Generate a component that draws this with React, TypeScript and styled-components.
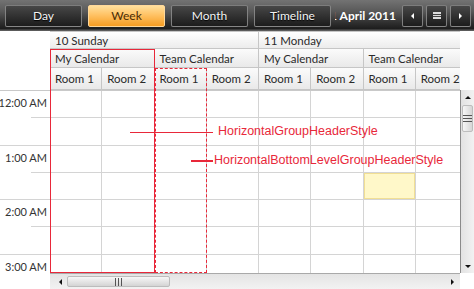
import React from 'react';
import styled, { createGlobalStyle, css } from 'styled-components';

const COL = 52.25;
const SLOT = 27.25;
const RED = '#e8283a';

const Global = createGlobalStyle`
  html, body { margin: 0; padding: 0; background: #fff; overflow: hidden; }
  body { width: 474px; height: 289px; font-family: Lato, "Open Sans", sans-serif; }
  * { box-sizing: border-box; }
`;

const Root = styled.div`
  position: relative;
  width: 474px;
  height: 289px;
  display: flex;
  flex-direction: column;
  background: #fff;
`;

const Toolbar = styled.div`
  height: 31px;
  flex: none;
  display: flex;
  align-items: center;
  padding: 0 0 0 5px;
  background: linear-gradient(#737373 0%, #5a5a5a 35%, #2e2e2e 75%, #1e1e1e 92%, #6a6a6a 100%);
`;

const ViewButtons = styled.div`
  display: flex;
  gap: 6px;
`;

const ViewButton = styled.div<{ $active?: boolean }>`
  width: 77px;
  height: 22px;
  display: flex;
  align-items: center;
  justify-content: center;
  border-radius: 2px;
  font-size: 12px;
  border: 1px solid rgba(150, 150, 150, 0.8);
  background: linear-gradient(#474747, #1c1c1c);
  color: #f4f4f4;
  text-shadow: 0 1px 1px #000;
  ${(p) =>
    p.$active &&
    css`
      border-color: #ffd89a;
      background: linear-gradient(#ffdf9c 0%, #ffc264 45%, #f79d22 100%);
      color: #4a2c05;
      text-shadow: none;
    `}
`;

const DateLabel = styled.div`
  width: 66px;
  margin-left: 4px;
  overflow: hidden;
  display: flex;
  justify-content: flex-end;
  padding-right: 5px;
  white-space: nowrap;
  color: #fff;
  font-weight: 700;
  font-size: 12px;
`;

const NavGroup = styled.div`
  display: flex;
  gap: 3px;
  margin-left: 1px;
`;

const NavButton = styled.div`
  width: 21px;
  height: 22px;
  display: flex;
  align-items: center;
  justify-content: center;
  border-radius: 2px;
  border: 1px solid rgba(150, 150, 150, 0.8);
  background: linear-gradient(#474747, #1c1c1c);
`;

const Tri = styled.span<{ $dir: 'left' | 'right' | 'up' | 'down'; $size?: number; $color?: string }>`
  width: 0;
  height: 0;
  ${({ $dir, $size = 3, $color = '#fff' }) => {
    const t = 'transparent';
    if ($dir === 'left') return css`border-top: ${$size}px solid ${t}; border-bottom: ${$size}px solid ${t}; border-right: ${$size}px solid ${$color};`;
    if ($dir === 'right') return css`border-top: ${$size}px solid ${t}; border-bottom: ${$size}px solid ${t}; border-left: ${$size}px solid ${$color};`;
    if ($dir === 'up') return css`border-left: ${$size}px solid ${t}; border-right: ${$size}px solid ${t}; border-bottom: ${$size}px solid ${$color};`;
    return css`border-left: ${$size}px solid ${t}; border-right: ${$size}px solid ${t}; border-top: ${$size}px solid ${$color};`;
  }}
`;

const Band = styled.div<{ $h: number }>`
  height: ${(p) => p.$h}px;
  flex: none;
  display: flex;
`;

const Blank = styled.div<{ $w: number }>`
  width: ${(p) => p.$w}px;
  flex: none;
  background: #fff;
`;

const Viewport = styled.div`
  width: 410px;
  flex: none;
  overflow: hidden;
  position: relative;
`;

const HeaderGrid = styled.div`
  display: grid;
  grid-template-columns: repeat(8, ${COL}px);
  grid-template-rows: 18px 19px 22px;
  height: 59px;
`;

const HeaderCell = styled.div<{ $span: number }>`
  grid-column: span ${(p) => p.$span};
  display: flex;
  align-items: center;
  padding-left: 5px;
  font-size: 11.5px;
  color: #2a2a2a;
  white-space: nowrap;
  overflow: hidden;
  border-right: 1px solid #c6c6c6;
  border-bottom: 1px solid #c6c6c6;
  background: linear-gradient(#fbfbfb, #e9e9e9);
`;

const DayCell = styled(HeaderCell)`
  border-top: 1px solid #c6c6c6;
  background: linear-gradient(#ffffff, #ececec);
`;

const TimeColumn = styled.div`
  width: 50px;
  flex: none;
  overflow: hidden;
  border-top: 1px solid #c9c9c9;
`;

const HourBlock = styled.div`
  position: relative;
  height: ${SLOT * 2}px;
  border-bottom: 1px solid #d4d4d4;
  display: flex;
  justify-content: flex-end;
  padding: 5px 3px 0 0;
  font-size: 11px;
  line-height: 14px;
  white-space: nowrap;
  color: #333;
  &::after {
    content: '';
    position: absolute;
    left: 31px;
    right: 0;
    top: ${SLOT - 1}px;
    border-top: 1px solid #d4d4d4;
  }
`;

const SlotGrid = styled.div`
  display: grid;
  grid-template-columns: repeat(8, ${COL}px);
  grid-auto-rows: ${SLOT}px;
  border-top: 1px solid #c9c9c9;
`;

const SlotCell = styled.div<{ $selected?: boolean }>`
  border-right: 1px solid #d4d4d4;
  border-bottom: 1px solid #d4d4d4;
  background: #fff;
  ${(p) =>
    p.$selected &&
    css`
      background: #fff8c9;
      box-shadow: inset 0 0 0 1px #f1df94;
    `}
`;

const VScroll = styled.div`
  width: 14px;
  flex: none;
  display: flex;
  flex-direction: column;
  border-left: 1px solid #8a8a8a;
  background: linear-gradient(90deg, #e2e2e2, #f2f2f2);
`;

const ScrollArrow = styled.div`
  flex: none;
  height: 14px;
  display: flex;
  align-items: center;
  justify-content: center;
`;

const VThumb = styled.div`
  margin: 1px 1px 0 1px;
  height: 27px;
  display: flex;
  align-items: center;
  justify-content: center;
  border-radius: 2px;
  border: 1px solid #bdbdbd;
  background: linear-gradient(90deg, #f6f6f6, #d6d6d6);
`;

const Spacer = styled.div`
  flex: 1;
`;

const HScroll = styled.div`
  width: 410px;
  flex: none;
  display: flex;
  align-items: center;
  padding: 0 4px 0 6px;
  border-top: 1px solid #a9a9a9;
  background: linear-gradient(#e4e4e4, #f2f2f2);
`;

const HArrow = styled.div`
  width: 8px;
  display: flex;
  justify-content: center;
`;

const HThumb = styled.div`
  margin-left: 3px;
  width: 103px;
  height: 11px;
  display: flex;
  align-items: center;
  justify-content: center;
  border-radius: 2px;
  border: 1px solid #bcbcbc;
  background: linear-gradient(#f7f7f7, #d4d4d4);
`;

const Overlay = styled.div`
  position: absolute;
  inset: 0;
  pointer-events: none;
`;

const Box = styled.div<{ $x: number; $y: number; $w: number; $h: number; $dashed?: boolean }>`
  position: absolute;
  left: ${(p) => p.$x}px;
  top: ${(p) => p.$y}px;
  width: ${(p) => p.$w}px;
  height: ${(p) => p.$h}px;
  border: ${(p) => (p.$dashed ? `1px dashed ${RED}` : `1.5px solid ${RED}`)};
`;

const Leader = styled.div<{ $x: number; $y: number; $w: number }>`
  position: absolute;
  left: ${(p) => p.$x}px;
  top: ${(p) => p.$y}px;
  width: ${(p) => p.$w}px;
  height: 1.5px;
  background: ${RED};
`;

const Note = styled.div<{ $x: number; $y: number }>`
  position: absolute;
  left: ${(p) => p.$x}px;
  top: ${(p) => p.$y}px;
  font-family: "Liberation Sans", Arial, sans-serif;
  font-size: 12.5px;
  line-height: 15px;
  color: ${RED};
  white-space: nowrap;
`;

const Grip = ({ vertical }: { vertical?: boolean }) =>
  vertical ? (
    <svg width="9" height="7" viewBox="0 0 9 7">
      <rect x="0" y="0" width="9" height="1" fill="#555" />
      <rect x="0" y="3" width="9" height="1" fill="#555" />
      <rect x="0" y="6" width="9" height="1" fill="#555" />
    </svg>
  ) : (
    <svg width="7" height="8" viewBox="0 0 7 8">
      <rect x="0" y="0" width="1" height="8" fill="#555" />
      <rect x="3" y="0" width="1" height="8" fill="#555" />
      <rect x="6" y="0" width="1" height="8" fill="#555" />
    </svg>
  );

const MenuIcon = () => (
  <svg width="8" height="7" viewBox="0 0 8 7">
    <rect x="0" y="0" width="8" height="7" fill="#ddd" />
    <rect x="0" y="2" width="8" height="1" fill="#444" />
    <rect x="0" y="4" width="8" height="1" fill="#444" />
  </svg>
);

const days = ['10 Sunday', '11 Monday'];
const calendars = ['My Calendar', 'Team Calendar', 'My Calendar', 'Team Calendar'];
const rooms = Array.from({ length: 8 }, (_, i) => `Room ${(i % 2) + 1}`);
const hours = ['12:00 AM', '1:00 AM', '2:00 AM', '3:00 AM'];

export default function App() {
  return (
    <Root>
      <Global />
      <Toolbar>
        <ViewButtons>
          <ViewButton>Day</ViewButton>
          <ViewButton $active>Week</ViewButton>
          <ViewButton>Month</ViewButton>
          <ViewButton>Timeline</ViewButton>
        </ViewButtons>
        <DateLabel>11 April 2011</DateLabel>
        <NavGroup>
          <NavButton>
            <Tri $dir="left" />
          </NavButton>
          <NavButton>
            <MenuIcon />
          </NavButton>
          <NavButton>
            <Tri $dir="right" />
          </NavButton>
        </NavGroup>
      </Toolbar>

      <Band $h={59}>
        <Blank $w={50} />
        <Viewport>
          <HeaderGrid>
            {days.map((d) => (
              <DayCell key={d} $span={4}>
                {d}
              </DayCell>
            ))}
            {calendars.map((c, i) => (
              <HeaderCell key={i} $span={2}>
                {c}
              </HeaderCell>
            ))}
            {rooms.map((r, i) => (
              <HeaderCell key={i} $span={1}>
                {r}
              </HeaderCell>
            ))}
          </HeaderGrid>
        </Viewport>
        <Blank $w={14} />
      </Band>

      <Band $h={183}>
        <TimeColumn>
          {hours.map((h) => (
            <HourBlock key={h}>{h}</HourBlock>
          ))}
        </TimeColumn>
        <Viewport>
          <SlotGrid>
            {Array.from({ length: 8 * 8 }, (_, i) => {
              const row = Math.floor(i / 8);
              const col = i % 8;
              return <SlotCell key={i} $selected={row === 3 && col === 6} />;
            })}
          </SlotGrid>
        </Viewport>
        <VScroll>
          <ScrollArrow>
            <Tri $dir="up" $color="#111" />
          </ScrollArrow>
          <VThumb>
            <Grip vertical />
          </VThumb>
          <Spacer />
          <ScrollArrow>
            <Tri $dir="down" $color="#111" />
          </ScrollArrow>
        </VScroll>
      </Band>

      <Band $h={16}>
        <Blank $w={50} />
        <HScroll>
          <HArrow>
            <Tri $dir="left" $color="#111" />
          </HArrow>
          <HThumb>
            <Grip />
          </HThumb>
          <Spacer />
          <HArrow>
            <Tri $dir="right" $color="#111" />
          </HArrow>
        </HScroll>
        <Blank $w={14} />
      </Band>

      <Overlay>
        <Box $x={50} $y={49} $w={104.5} $h={224} />
        <Box $x={154.5} $y={68} $w={52} $h={205} $dashed />
        <Leader $x={130} $y={131.5} $w={83} />
        <Note $x={218} $y={124}>HorizontalGroupHeaderStyle</Note>
        <Leader $x={191} $y={160} $w={22} />
        <Note $x={214} $y={152.5}>HorizontalBottomLevelGroupHeaderStyle</Note>
      </Overlay>
    </Root>
  );
}
